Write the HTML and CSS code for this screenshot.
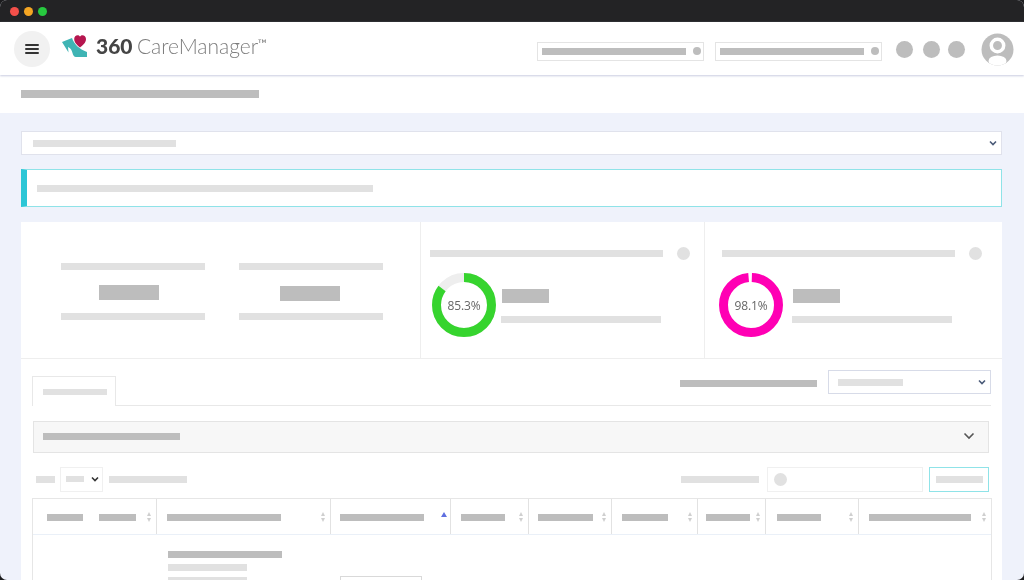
FILE: index.html
```html
<!DOCTYPE html>
<html lang="en">
<head>
<meta charset="utf-8">
<title>360 CareManager</title>
<link rel="stylesheet" href="styles.css">
</head>
<body>
<div class="window">
  <div class="chrome">
    <i class="light red"></i><i class="light amber"></i><i class="light green"></i>
  </div>
  <header class="topbar">
    <button class="menu" aria-label="Menu">
      <svg width="14" height="12" viewBox="0 0 14 12"><path d="M1 2h12M1 6h12M1 10h12" stroke="#333" stroke-width="2" stroke-linecap="round"/></svg>
    </button>
    <svg class="mark" width="26" height="23" viewBox="0 0 26 23">
      <path d="M0 7 10 3C12 9 17 14 25 17V22H14C12 22 11 20 10.500 18C9.800 15 8.500 13 6 12L6.500 17.500Z" fill="#3fb4b4"/>
      <path d="M18 12.500C15.800 10.500 12.200 8 12.200 4C12.200 1.800 13.800 .2 15.600 .2C16.900 .2 17.700 .9 18 1.600C18.400 .9 19.200 .2 20.400 .2C22.300 .2 24 1.800 24 4C24 8 20.300 10.500 18 12.500Z" fill="#b5164f"/>
    </svg>
    <div class="brand"><b>360</b> <span>CareManager</span><sup>™</sup></div>
    <div class="tools">
      <div class="searchbox"><span class="bar dark w144 h7"></span><i class="dot d8"></i></div>
      <div class="searchbox"><span class="bar dark w144 h7"></span><i class="dot d8"></i></div>
      <i class="dot d17 first"></i><i class="dot d17 mid"></i><i class="dot d17"></i>
      <svg class="avatar" width="33" height="33" viewBox="0 0 33 33">
        <defs><clipPath id="a"><circle cx="16.500" cy="16.500" r="16"/></clipPath></defs>
        <circle cx="16.500" cy="16.500" r="16" fill="#bdbdbd"/>
        <circle cx="16.500" cy="12.500" r="6.200" fill="none" stroke="#fff" stroke-width="3.500"/>
        <ellipse cx="16.500" cy="28" rx="9" ry="5.500" fill="#fff" clip-path="url(#a)"/>
      </svg>
    </div>
  </header>
  <div class="crumb"><span class="bar dark w238 h8"></span></div>

  <main class="content">
    <div class="pick">
      <span class="bar light w143 h7"></span>
      <svg class="chev" width="8" height="6" viewBox="0 0 8 6"><path d="M1 1.500 4 4.500 7 1.500" fill="none" stroke="#4a5a78" stroke-width="1.600"/></svg>
    </div>
    <div class="notice"><span class="bar light w336 h7"></span></div>

    <section class="card">
      <div class="stats">
        <div class="totals">
          <div class="total one">
            <span class="bar light w144 h7"></span>
            <span class="bar dark w60 h15 off-left"></span>
            <span class="bar light w144 h7"></span>
          </div>
          <div class="total two">
            <span class="bar light w144 h7"></span>
            <span class="bar dark w60 h15 off-right"></span>
            <span class="bar light w144 h7"></span>
          </div>
        </div>
        <div class="gauge gauge-a">
          <div class="gauge-head"><span class="bar light w233 h7"></span><i class="dot d13"></i></div>
          <div class="gauge-body">
            <div class="ring">
              <svg width="64" height="64" viewBox="0 0 64 64">
                <circle class="track" cx="32" cy="32" r="27.500" pathLength="100"/>
                <circle class="arc arc-green" cx="32" cy="32" r="27.500" pathLength="100"/>
              </svg>
              <span class="pct">85.3%</span>
            </div>
            <div class="gauge-text"><span class="bar dark w47 h14"></span><span class="bar light w160 h7"></span></div>
          </div>
        </div>
        <div class="gauge gauge-b">
          <div class="gauge-head"><span class="bar light w233 h7"></span><i class="dot d13"></i></div>
          <div class="gauge-body">
            <div class="ring">
              <svg width="64" height="64" viewBox="0 0 64 64">
                <circle class="arc arc-pink" cx="32" cy="32" r="27.500" pathLength="100"/>
              </svg>
              <span class="pct">98.1%</span>
            </div>
            <div class="gauge-text"><span class="bar dark w47 h14"></span><span class="bar light w160 h7"></span></div>
          </div>
        </div>
      </div>

      <div class="panel">
        <div class="tabs">
          <div class="tab"><span class="bar light w64 h6"></span></div>
          <div class="tab-tools">
            <span class="bar dark w137 h7 tab-label"></span>
            <div class="tab-select">
              <span class="bar light w65 h7"></span>
              <svg width="8" height="6" viewBox="0 0 8 6"><path d="M1 1.500 4 4.500 7 1.500" fill="none" stroke="#4a5a78" stroke-width="1.600"/></svg>
            </div>
          </div>
        </div>

        <div class="accordion">
          <span class="bar dark w137 h7"></span>
          <svg width="12" height="8" viewBox="0 0 12 8"><path d="M1.500 1.500 6 6 10.500 1.500" fill="none" stroke="#555" stroke-width="1.600"/></svg>
        </div>

        <div class="controls">
          <div class="ctl-left">
            <span class="bar light w19 h7"></span>
            <div class="len"><span class="bar light w18 h6"></span><svg width="8" height="6" viewBox="0 0 8 6"><path d="M1 1.500 4 4.500 7 1.500" fill="none" stroke="#333" stroke-width="1.600"/></svg></div>
            <span class="bar light w78 h7"></span>
          </div>
          <div class="ctl-right">
            <span class="bar light w78 h7"></span>
            <div class="find"><i class="dot d13"></i></div>
            <div class="export"><span class="bar light w47 h7"></span></div>
          </div>
        </div>

        <div class="table">
          <div class="thead">
            <div class="th c1"><span class="bar dark w36 h7"></span><span class="bar dark w37 h7 gap16"></span><i class="sort"></i></div>
            <div class="th c2"><span class="bar dark w114 h7"></span><i class="sort"></i></div>
            <div class="th c3"><span class="bar dark w84 h7"></span><i class="sort asc"></i></div>
            <div class="th c4"><span class="bar dark w44 h7"></span><i class="sort"></i></div>
            <div class="th c5"><span class="bar dark w55 h7"></span><i class="sort"></i></div>
            <div class="th c6"><span class="bar dark w46 h7"></span><i class="sort"></i></div>
            <div class="th c7"><span class="bar dark w44 h7"></span><i class="sort"></i></div>
            <div class="th c8"><span class="bar dark w44 h7"></span><i class="sort"></i></div>
            <div class="th c9"><span class="bar dark w102 h7"></span><i class="sort"></i></div>
          </div>
          <div class="trow">
            <div class="td c1"></div>
            <div class="td c2 stack"><span class="bar dark w114 h7"></span><span class="bar light w79 h7"></span><span class="bar light w79 h7"></span></div>
            <div class="td c3"><div class="cellbox"></div></div>
          </div>
        </div>
      </div>
    </section>
  </main>
</div>
</body>
</html>
```

FILE: styles.css
```css
* { box-sizing: border-box; }
html, body { margin: 0; height: 580px; overflow: hidden; background: #1c1c1e; }
i { display: block; font-style: normal; }
.window { width: 1024px; height: 580px; overflow: hidden; border-radius: 7px; background: #eff2fb; display: flex; flex-direction: column; font-family: "Open Sans", sans-serif; filter: blur(.5px); }

.bar { display: block; flex: none; }
.dark { background: #bdbdbd; }
.light { background: #e1e1e1; }
.h6 { height: 6px; } .h7 { height: 7px; } .h8 { height: 8px; } .h14 { height: 14px; } .h15 { height: 15px; }
.w18 { width: 18px; } .w19 { width: 19px; } .w36 { width: 36px; } .w37 { width: 37px; } .w44 { width: 44px; }
.w46 { width: 46px; } .w47 { width: 47px; } .w55 { width: 55px; } .w60 { width: 60px; } .w64 { width: 64px; }
.w65 { width: 65px; } .w78 { width: 78px; } .w79 { width: 79px; } .w84 { width: 84px; } .w102 { width: 102px; }
.w114 { width: 114px; } .w137 { width: 137px; } .w143 { width: 143px; } .w144 { width: 144px; } .w160 { width: 160px; }
.w233 { width: 233px; } .w238 { width: 238px; } .w336 { width: 336px; }
.dot { border-radius: 50%; background: #bdbdbd; flex: none; }
.d8 { width: 8px; height: 8px; } .d13 { width: 13px; height: 13px; background: #e1e1e1; } .d17 { width: 17px; height: 17px; }

.chrome { height: 22px; flex: none; background: #232325; display: flex; align-items: center; gap: 5px; padding-left: 10px; }
.light.red, .light.amber, .light.green { width: 9px; height: 9px; border-radius: 50%; }
.light.red { background: #f4504a; } .light.amber { background: #f5a623; } .light.green { background: #27c93f; }

.topbar { height: 53px; flex: none; background: #fff; display: flex; align-items: center; padding-left: 14px; box-shadow: 0 1px 2px #c9cce0; position: relative; }
.menu { width: 36px; height: 36px; border: 0; border-radius: 50%; background: #f1f1f1; padding: 0; display: flex; align-items: center; justify-content: center; }
.mark { margin-left: 12px; margin-top: -4px; flex: none; }
.brand { margin-left: 8px; font-family: Lato, sans-serif; font-size: 21px; line-height: 24px; color: #7d7d7d; white-space: nowrap; margin-top: -6px; }
.brand b { color: #454545; font-weight: 900; }
.brand span { font-weight: 300; margin-left: -1px; letter-spacing: -.02px; }
.brand sup { font-size: 12px; line-height: 0; font-weight: 400; vertical-align: 6px; }
.tools { margin-left: auto; display: flex; align-items: center; padding-right: 10px; margin-top: 5px; }
.searchbox { width: 167px; height: 19px; border: 1px solid #e4e4e4; display: flex; align-items: center; padding: 0 2px 0 4px; justify-content: space-between; margin-right: 11px; }
.tools .d17 { margin-right: 9px; margin-top: -3px; }
.tools .first { margin-left: 2.500px; margin-right: 10px; }
.tools .mid { margin-right: 8px; }
.avatar { margin-left: 7.500px; margin-top: -4px; flex: none; }

.crumb { height: 38px; flex: none; background: #fff; display: flex; align-items: center; padding-left: 21px; padding-bottom: 1px; }

.content { flex: 1; padding: 18px 22px 0 21px; display: flex; flex-direction: column; min-height: 0; }
.pick { height: 24px; flex: none; background: #fff; border: 1px solid #e0e2ec; display: flex; align-items: center; justify-content: space-between; padding: 0 4px 0 11px; }
.notice { height: 38px; flex: none; margin-top: 14px; background: #fff; border: 1px solid #8fe3e8; border-left: 6px solid #2cc6d6; display: flex; align-items: center; padding-left: 10px; }
.card { margin-top: 15px; flex: 1; background: #fff; min-height: 0; }

.stats { height: 137px; display: flex; border-bottom: 1px solid #eeeeee; }
.totals { width: 399px; flex: none; display: flex; padding: 41px 0 0 40px; gap: 34px; }
.total { width: 144px; display: flex; flex-direction: column; }
.total .h15 { margin: 15px 0 13px; }
.off-left { margin-left: 38px !important; }
.off-right { margin-left: 41px !important; }
.total.two .h15 { margin-top: 16px; margin-bottom: 12px; }
.gauge { border-left: 1px solid #eeeeee; padding: 25px 0 0 9px; }
.gauge-a { width: 284px; flex: none; }
.gauge-b { flex: 1; padding-left: 17px; }
.gauge-head { display: flex; align-items: center; gap: 14px; }
.gauge-body { display: flex; margin-top: 13px; margin-left: 2px; }
.gauge-b .gauge-body { margin-left: -3px; }
.ring { position: relative; width: 64px; height: 64px; flex: none; }
.ring svg { display: block; transform: rotate(-90deg); }
.track, .arc { fill: none; stroke-width: 9; }
.track { stroke: #eeeeee; }
.arc-green { stroke: #36d42e; stroke-dasharray: 85.3 100; }
.arc-pink { stroke: #ff00b4; stroke-dasharray: 98.1 100; stroke-dashoffset: -.5; }
.pct { position: absolute; inset: 0; display: flex; align-items: center; justify-content: center; font-size: 12px; font-weight: 500; color: #666666; letter-spacing: -.1px; }
.gauge-text { margin-left: 5px; padding-top: 16px; display: flex; flex-direction: column; gap: 13px; }
.gauge-b .gauge-text { margin-left: 9px; }
.gauge-text .h14 { margin-left: 1px; }

.panel { padding: 11px 11px 0 11px; }
.tabs { height: 36px; display: flex; justify-content: space-between; align-items: flex-start; border-bottom: 1px solid #e8e8e8; }
.tab { width: 84px; height: 30px; margin-top: 6px; border: 1px solid #e8e8e8; border-bottom: 0; background: #fff; display: flex; align-items: center; padding-left: 10px; }
.tab-tools { display: flex; align-items: center; }
.tab-label { margin-right: 11px; margin-top: 2px; }
.tab-select { width: 163px; height: 24px; border: 1px solid #d7dbe8; display: flex; align-items: center; justify-content: space-between; padding: 0 4px 0 9px; }
.accordion { height: 32px; margin: 15px 2px 0 1px; background: #f7f7f7; border: 1px solid #e4e4e4; display: flex; align-items: center; justify-content: space-between; padding: 0 13px 2px 9px; }
.controls { display: flex; justify-content: space-between; align-items: center; height: 26px; margin-top: 13px; padding: 0 2px 0 4px; }
.ctl-left, .ctl-right { display: flex; align-items: center; }
.len { width: 43px; height: 25px; margin: 0 6px 0 5px; border: 1px solid #f0f0f0; display: flex; align-items: center; justify-content: space-between; padding: 0 3px 0 5px; }
.find { width: 156px; height: 25px; margin: 0 6px 0 8px; border: 1px solid #f0f0f0; display: flex; align-items: center; padding-left: 6px; }
.export { width: 60px; height: 25px; border: 1px solid #8fe3e8; display: flex; align-items: center; justify-content: center; }
.table { margin-top: 6px; border: solid #e6e6e6; border-width: 1px 1px 0 1px; width: 960px; }
.thead { display: flex; height: 36px; border-bottom: 1px solid #eaf0f8; }
.trow { display: flex; }
.th { position: relative; display: flex; align-items: center; padding-left: 10px; border-left: 1px solid #e2e2e2; padding-top: 1px; }
.th.c1 { border-left: 0; padding-left: 14px; }
.th.c3 { padding-left: 9px; }
.th.c5 { padding-left: 9px; }
.th.c7 { padding-left: 8px; }
.th.c8 { padding-left: 11px; }
.c1 { width: 123px; flex: none; } .c2 { width: 174px; flex: none; } .c3 { width: 120px; flex: none; } .c4 { width: 78px; } .c5 { width: 83px; } .c6 { width: 86px; } .c7 { width: 68px; } .c8 { width: 93px; } .c9 { width: 133px; }
.gap16 { margin-left: 16px; }
.sort { position: absolute; right: 4px; top: 13px; width: 5px; height: 10px; }
.sort::before, .sort::after { content: ""; position: absolute; left: 0; border-left: 2.500px solid transparent; border-right: 2.500px solid transparent; }
.sort::before { top: 0; border-bottom: 4px solid #cfcfcf; }
.sort::after { bottom: 0; border-top: 4px solid #cfcfcf; }
.sort.asc { width: 6px; right: 3.500px; }
.sort.asc::before { border-left-width: 3px; border-right-width: 3px; border-bottom: 5px solid #5f6fe0; }
.sort.asc::after { border-top-color: transparent; }
.td { height: 60px; }
.stack { padding: 16px 0 0 12px; display: flex; flex-direction: column; gap: 6px; }
.td.c3 { padding: 41px 0 0 10px; }
.cellbox { width: 82px; height: 24px; border: 1px solid #d9d9d9; }
```
